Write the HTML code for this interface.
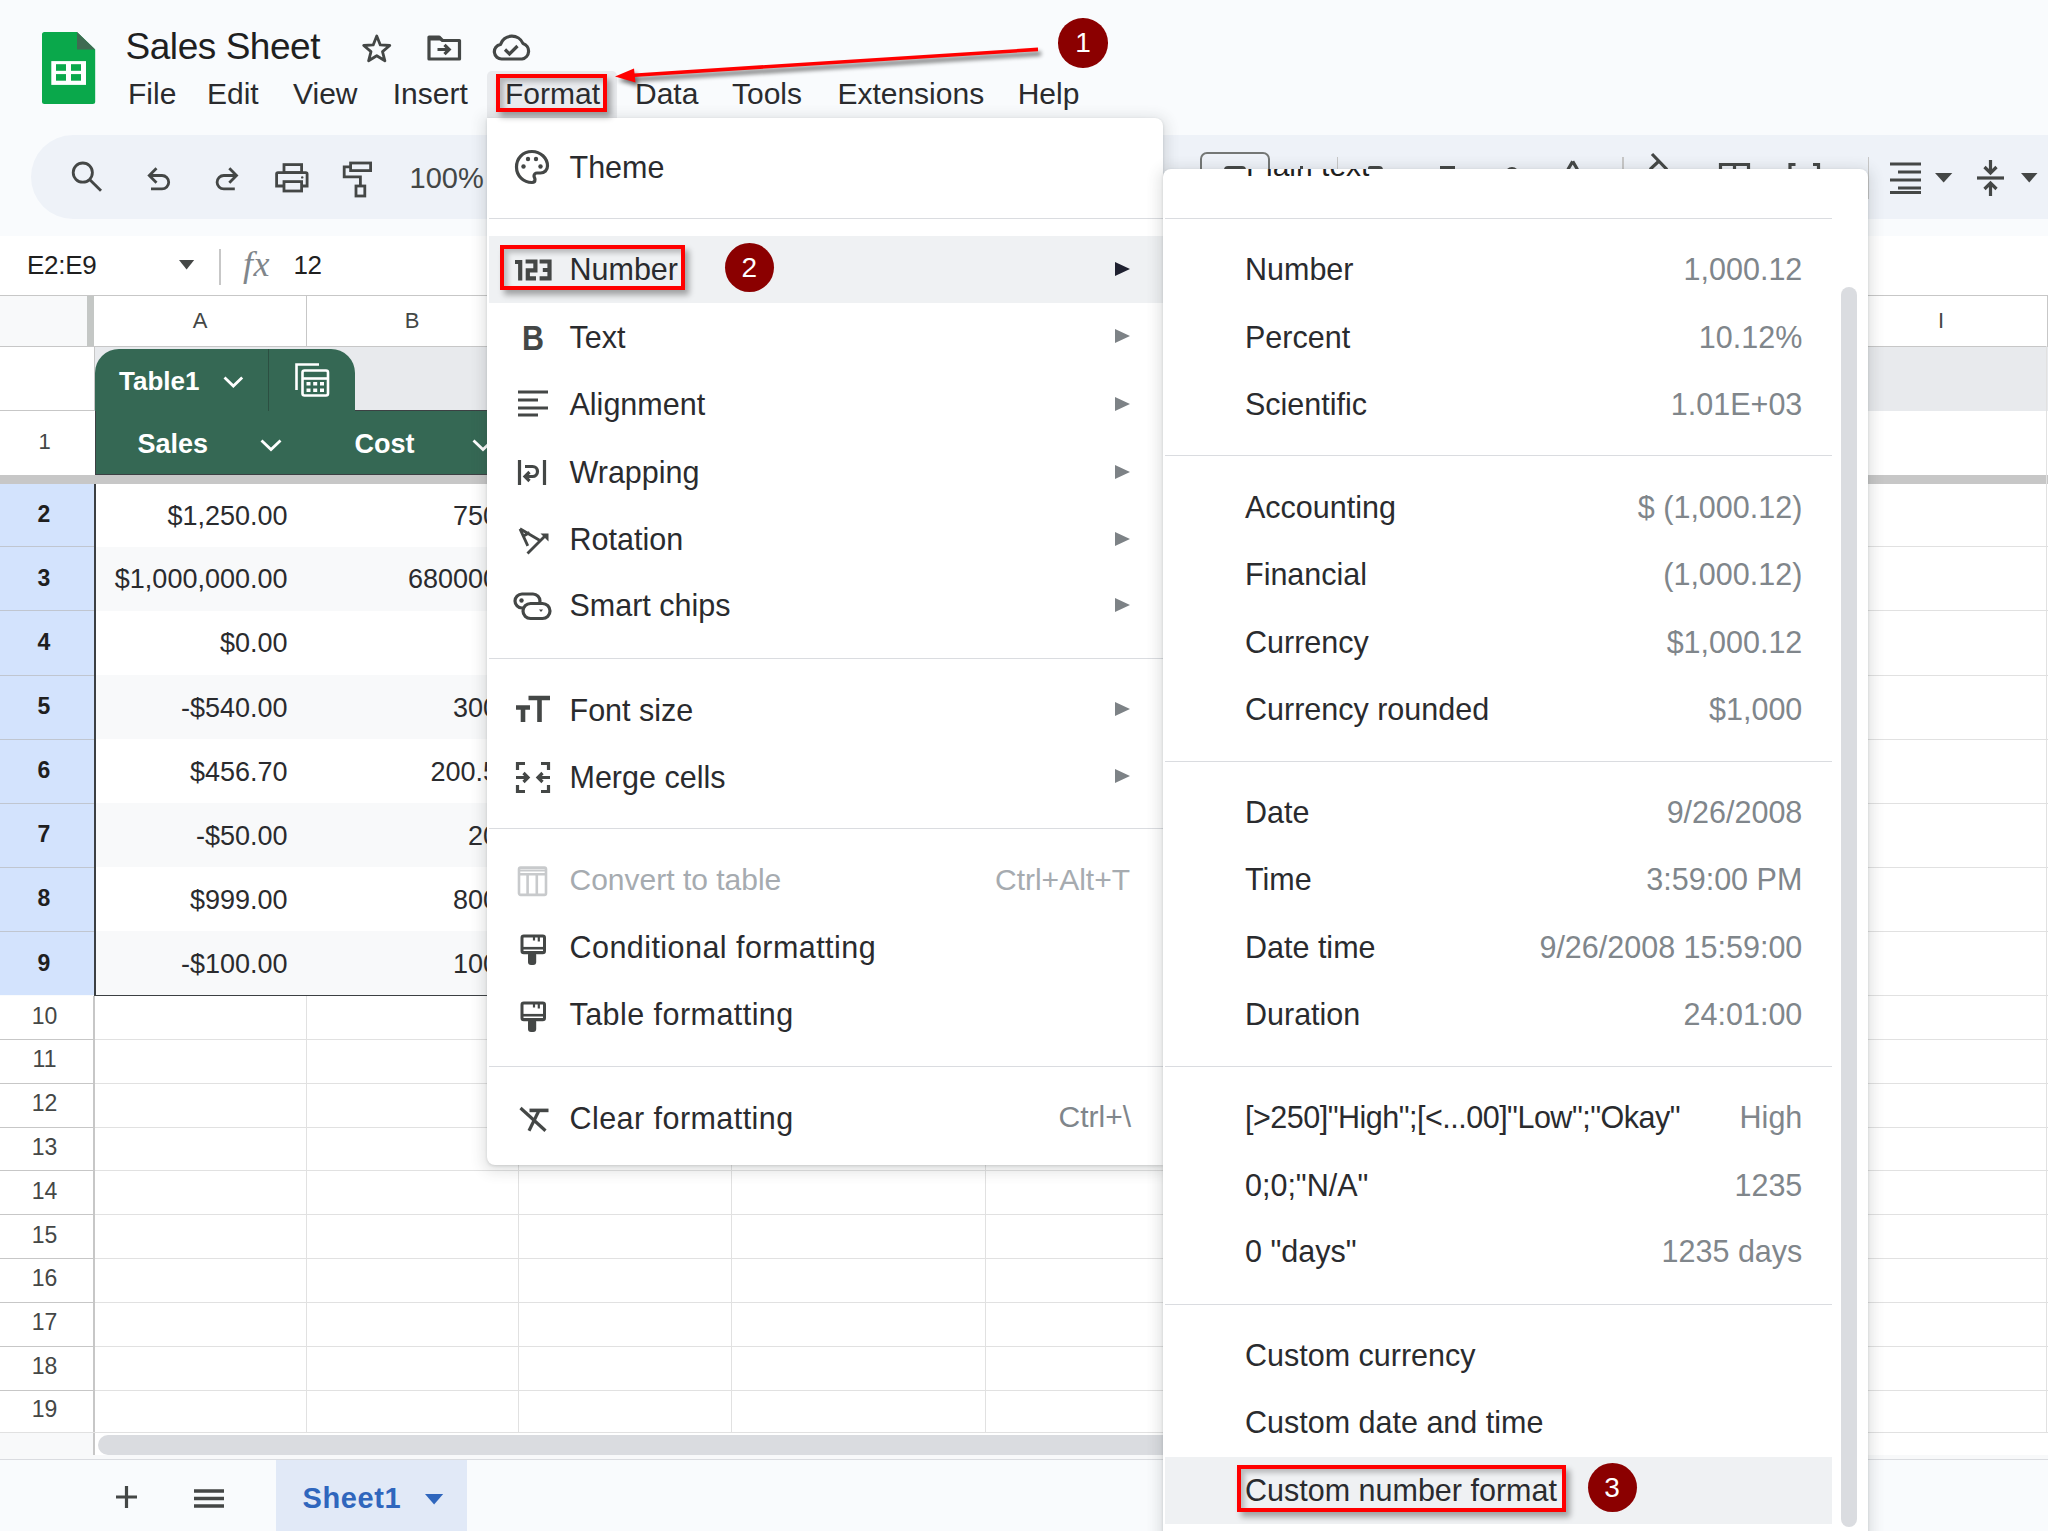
<!DOCTYPE html>
<html><head><meta charset="utf-8"><title>Sales Sheet</title>
<style>
html,body{margin:0;padding:0;}
body{width:2048px;height:1531px;overflow:hidden;position:relative;background:#f9fbfd;font-family:"Liberation Sans", sans-serif;}
.t{position:absolute;white-space:nowrap;}
.r{position:absolute;}
svg.r{overflow:visible;}
</style></head><body>
<div class="r" style="left:0.0px;top:236.0px;width:2048.0px;height:59.0px;background:#ffffff;"></div>
<div class="r" style="left:0.0px;top:295.0px;width:2048.0px;height:1.0px;background:#c7c7c7;"></div>
<div class="r" style="left:0.0px;top:296.0px;width:2048.0px;height:50.0px;background:#ffffff;"></div>
<div class="r" style="left:0.0px;top:296.0px;width:87.0px;height:50.0px;background:#f8f9fa;"></div>
<div class="r" style="left:87.0px;top:296.0px;width:7.0px;height:50.0px;background:#c4c7c5;"></div>
<div class="r" style="left:0.0px;top:345.5px;width:2048.0px;height:1.0px;background:#c7c7c7;"></div>
<div class="r" style="left:305.5px;top:296.0px;width:1.0px;height:50.0px;background:#c7c7c7;"></div>
<div class="r" style="left:518.0px;top:296.0px;width:1.0px;height:50.0px;background:#c7c7c7;"></div>
<div class="r" style="left:730.5px;top:296.0px;width:1.0px;height:50.0px;background:#c7c7c7;"></div>
<div class="r" style="left:984.5px;top:296.0px;width:1.0px;height:50.0px;background:#c7c7c7;"></div>
<div class="r" style="left:1239.5px;top:296.0px;width:1.0px;height:50.0px;background:#c7c7c7;"></div>
<div class="r" style="left:1494.5px;top:296.0px;width:1.0px;height:50.0px;background:#c7c7c7;"></div>
<div class="r" style="left:1749.5px;top:296.0px;width:1.0px;height:50.0px;background:#c7c7c7;"></div>
<div class="r" style="left:2046.5px;top:296.0px;width:1.0px;height:50.0px;background:#c7c7c7;"></div>
<div class="t" style="left:200.0px;transform:translateX(-50%);top:310.2px;font-size:22px;line-height:22px;color:#444746;font-weight:400;">A</div>
<div class="t" style="left:412.0px;transform:translateX(-50%);top:310.2px;font-size:22px;line-height:22px;color:#444746;font-weight:400;">B</div>
<div class="t" style="left:1941.0px;transform:translateX(-50%);top:310.2px;font-size:22px;line-height:22px;color:#444746;font-weight:400;">I</div>
<div class="r" style="left:94.0px;top:346.5px;width:1954.0px;height:64.1px;background:#e8eaed;"></div>
<div class="r" style="left:0.0px;top:346.5px;width:94.0px;height:64.1px;background:#ffffff;"></div>
<div class="r" style="left:0.0px;top:410.1px;width:94.0px;height:1.0px;background:#c7c7c7;"></div>
<div class="r" style="left:93.5px;top:346.5px;width:1.0px;height:137.5px;background:#c7c7c7;"></div>
<div class="r" style="left:0.0px;top:411.1px;width:93.5px;height:63.5px;background:#ffffff;"></div>
<div class="r" style="left:94.0px;top:410.6px;width:1954.0px;height:64.0px;background:#ffffff;"></div>
<div class="t" style="left:44.5px;transform:translateX(-50%);top:431.1px;font-size:22px;line-height:22px;color:#444746;font-weight:400;">1</div>
<div class="r" style="left:95.0px;top:410.6px;width:1068.0px;height:64.0px;background:#356854;"></div>
<div class="r" style="left:95.0px;top:410.1px;width:1068.0px;height:1.2px;background:#3c4043;"></div>
<div class="r" style="left:94.5px;top:410.1px;width:1.3px;height:64.9px;background:#3c4043;"></div>
<div class="r" style="left:95.0px;top:473.8px;width:1068.0px;height:1.2px;background:#3c4043;"></div>
<div class="r" style="left:0.0px;top:474.6px;width:2048.0px;height:9.4px;background:#c7c7c7;"></div>
<div class="r" style="left:0.0px;top:484.0px;width:93.8px;height:62.8px;background:#d3e3fd;"></div>
<div class="r" style="left:96.0px;top:484.0px;width:1067.0px;height:62.8px;background:#ffffff;"></div>
<div class="r" style="left:1868.0px;top:546.3px;width:180.0px;height:1.0px;background:#e1e1e1;"></div>
<div class="r" style="left:0.0px;top:546.8px;width:93.8px;height:64.1px;background:#d3e3fd;"></div>
<div class="r" style="left:96.0px;top:546.8px;width:1067.0px;height:64.1px;background:#f8f9fa;"></div>
<div class="r" style="left:0.0px;top:546.3px;width:93.8px;height:1.0px;background:#c0c6d0;"></div>
<div class="r" style="left:1868.0px;top:610.4px;width:180.0px;height:1.0px;background:#e1e1e1;"></div>
<div class="r" style="left:0.0px;top:610.9px;width:93.8px;height:64.1px;background:#d3e3fd;"></div>
<div class="r" style="left:96.0px;top:610.9px;width:1067.0px;height:64.1px;background:#ffffff;"></div>
<div class="r" style="left:0.0px;top:610.4px;width:93.8px;height:1.0px;background:#c0c6d0;"></div>
<div class="r" style="left:1868.0px;top:674.5px;width:180.0px;height:1.0px;background:#e1e1e1;"></div>
<div class="r" style="left:0.0px;top:675.0px;width:93.8px;height:64.1px;background:#d3e3fd;"></div>
<div class="r" style="left:96.0px;top:675.0px;width:1067.0px;height:64.1px;background:#f8f9fa;"></div>
<div class="r" style="left:0.0px;top:674.5px;width:93.8px;height:1.0px;background:#c0c6d0;"></div>
<div class="r" style="left:1868.0px;top:738.6px;width:180.0px;height:1.0px;background:#e1e1e1;"></div>
<div class="r" style="left:0.0px;top:739.1px;width:93.8px;height:64.1px;background:#d3e3fd;"></div>
<div class="r" style="left:96.0px;top:739.1px;width:1067.0px;height:64.1px;background:#ffffff;"></div>
<div class="r" style="left:0.0px;top:738.6px;width:93.8px;height:1.0px;background:#c0c6d0;"></div>
<div class="r" style="left:1868.0px;top:802.7px;width:180.0px;height:1.0px;background:#e1e1e1;"></div>
<div class="r" style="left:0.0px;top:803.2px;width:93.8px;height:64.1px;background:#d3e3fd;"></div>
<div class="r" style="left:96.0px;top:803.2px;width:1067.0px;height:64.1px;background:#f8f9fa;"></div>
<div class="r" style="left:0.0px;top:802.7px;width:93.8px;height:1.0px;background:#c0c6d0;"></div>
<div class="r" style="left:1868.0px;top:866.8px;width:180.0px;height:1.0px;background:#e1e1e1;"></div>
<div class="r" style="left:0.0px;top:867.3px;width:93.8px;height:64.1px;background:#d3e3fd;"></div>
<div class="r" style="left:96.0px;top:867.3px;width:1067.0px;height:64.1px;background:#ffffff;"></div>
<div class="r" style="left:0.0px;top:866.8px;width:93.8px;height:1.0px;background:#c0c6d0;"></div>
<div class="r" style="left:1868.0px;top:930.9px;width:180.0px;height:1.0px;background:#e1e1e1;"></div>
<div class="r" style="left:0.0px;top:931.4px;width:93.8px;height:64.1px;background:#d3e3fd;"></div>
<div class="r" style="left:96.0px;top:931.4px;width:1067.0px;height:64.1px;background:#f8f9fa;"></div>
<div class="r" style="left:0.0px;top:930.9px;width:93.8px;height:1.0px;background:#c0c6d0;"></div>
<div class="r" style="left:1868.0px;top:995.0px;width:180.0px;height:1.0px;background:#e1e1e1;"></div>
<div class="r" style="left:93.8px;top:484.0px;width:2.2px;height:512.0px;background:#3c4043;"></div>
<div class="r" style="left:95.0px;top:994.5px;width:1068.0px;height:2.0px;background:#3c4043;"></div>
<div class="t" style="left:44.0px;transform:translateX(-50%);top:503.4px;font-size:23px;line-height:23px;color:#1f1f1f;font-weight:700;">2</div>
<div class="t" style="left:44.0px;transform:translateX(-50%);top:566.9px;font-size:23px;line-height:23px;color:#1f1f1f;font-weight:700;">3</div>
<div class="t" style="left:44.0px;transform:translateX(-50%);top:631.0px;font-size:23px;line-height:23px;color:#1f1f1f;font-weight:700;">4</div>
<div class="t" style="left:44.0px;transform:translateX(-50%);top:695.1px;font-size:23px;line-height:23px;color:#1f1f1f;font-weight:700;">5</div>
<div class="t" style="left:44.0px;transform:translateX(-50%);top:759.2px;font-size:23px;line-height:23px;color:#1f1f1f;font-weight:700;">6</div>
<div class="t" style="left:44.0px;transform:translateX(-50%);top:823.3px;font-size:23px;line-height:23px;color:#1f1f1f;font-weight:700;">7</div>
<div class="t" style="left:44.0px;transform:translateX(-50%);top:887.4px;font-size:23px;line-height:23px;color:#1f1f1f;font-weight:700;">8</div>
<div class="t" style="left:44.0px;transform:translateX(-50%);top:951.5px;font-size:23px;line-height:23px;color:#1f1f1f;font-weight:700;">9</div>
<div class="t" style="right:1760.5px;top:502.8px;font-size:27px;line-height:27px;color:#2a2b2e;font-weight:400;">$1,250.00</div>
<div class="t" style="right:1760.5px;top:566.3px;font-size:27px;line-height:27px;color:#2a2b2e;font-weight:400;">$1,000,000.00</div>
<div class="t" style="right:1760.5px;top:630.4px;font-size:27px;line-height:27px;color:#2a2b2e;font-weight:400;">$0.00</div>
<div class="t" style="right:1760.5px;top:694.5px;font-size:27px;line-height:27px;color:#2a2b2e;font-weight:400;">-$540.00</div>
<div class="t" style="right:1760.5px;top:758.6px;font-size:27px;line-height:27px;color:#2a2b2e;font-weight:400;">$456.70</div>
<div class="t" style="right:1760.5px;top:822.7px;font-size:27px;line-height:27px;color:#2a2b2e;font-weight:400;">-$50.00</div>
<div class="t" style="right:1760.5px;top:886.8px;font-size:27px;line-height:27px;color:#2a2b2e;font-weight:400;">$999.00</div>
<div class="t" style="right:1760.5px;top:950.9px;font-size:27px;line-height:27px;color:#2a2b2e;font-weight:400;">-$100.00</div>
<div class="t" style="right:1550.0px;top:502.8px;font-size:27px;line-height:27px;color:#2a2b2e;font-weight:400;">750</div>
<div class="t" style="right:1550.0px;top:566.3px;font-size:27px;line-height:27px;color:#2a2b2e;font-weight:400;">680000</div>
<div class="t" style="right:1550.0px;top:694.5px;font-size:27px;line-height:27px;color:#2a2b2e;font-weight:400;">300</div>
<div class="t" style="right:1550.0px;top:758.6px;font-size:27px;line-height:27px;color:#2a2b2e;font-weight:400;">200.5</div>
<div class="t" style="right:1550.0px;top:822.7px;font-size:27px;line-height:27px;color:#2a2b2e;font-weight:400;">20</div>
<div class="t" style="right:1550.0px;top:886.8px;font-size:27px;line-height:27px;color:#2a2b2e;font-weight:400;">800</div>
<div class="t" style="right:1550.0px;top:950.9px;font-size:27px;line-height:27px;color:#2a2b2e;font-weight:400;">100</div>
<div class="r" style="left:0.0px;top:996.0px;width:2048.0px;height:436.0px;background:#ffffff;"></div>
<div class="r" style="left:0.0px;top:1038.8px;width:2048.0px;height:1.0px;background:#e1e1e1;"></div>
<div class="r" style="left:0.0px;top:1038.8px;width:93.8px;height:1.0px;background:#c7c7c7;"></div>
<div class="t" style="left:44.5px;transform:translateX(-50%);top:1004.5px;font-size:23px;line-height:23px;color:#444746;font-weight:400;">10</div>
<div class="r" style="left:0.0px;top:1082.6px;width:2048.0px;height:1.0px;background:#e1e1e1;"></div>
<div class="r" style="left:0.0px;top:1082.6px;width:93.8px;height:1.0px;background:#c7c7c7;"></div>
<div class="t" style="left:44.5px;transform:translateX(-50%);top:1048.1px;font-size:23px;line-height:23px;color:#444746;font-weight:400;">11</div>
<div class="r" style="left:0.0px;top:1126.5px;width:2048.0px;height:1.0px;background:#e1e1e1;"></div>
<div class="r" style="left:0.0px;top:1126.5px;width:93.8px;height:1.0px;background:#c7c7c7;"></div>
<div class="t" style="left:44.5px;transform:translateX(-50%);top:1091.9px;font-size:23px;line-height:23px;color:#444746;font-weight:400;">12</div>
<div class="r" style="left:0.0px;top:1170.3px;width:2048.0px;height:1.0px;background:#e1e1e1;"></div>
<div class="r" style="left:0.0px;top:1170.3px;width:93.8px;height:1.0px;background:#c7c7c7;"></div>
<div class="t" style="left:44.5px;transform:translateX(-50%);top:1135.8px;font-size:23px;line-height:23px;color:#444746;font-weight:400;">13</div>
<div class="r" style="left:0.0px;top:1214.2px;width:2048.0px;height:1.0px;background:#e1e1e1;"></div>
<div class="r" style="left:0.0px;top:1214.2px;width:93.8px;height:1.0px;background:#c7c7c7;"></div>
<div class="t" style="left:44.5px;transform:translateX(-50%);top:1179.6px;font-size:23px;line-height:23px;color:#444746;font-weight:400;">14</div>
<div class="r" style="left:0.0px;top:1258.0px;width:2048.0px;height:1.0px;background:#e1e1e1;"></div>
<div class="r" style="left:0.0px;top:1258.0px;width:93.8px;height:1.0px;background:#c7c7c7;"></div>
<div class="t" style="left:44.5px;transform:translateX(-50%);top:1223.5px;font-size:23px;line-height:23px;color:#444746;font-weight:400;">15</div>
<div class="r" style="left:0.0px;top:1301.9px;width:2048.0px;height:1.0px;background:#e1e1e1;"></div>
<div class="r" style="left:0.0px;top:1301.9px;width:93.8px;height:1.0px;background:#c7c7c7;"></div>
<div class="t" style="left:44.5px;transform:translateX(-50%);top:1267.3px;font-size:23px;line-height:23px;color:#444746;font-weight:400;">16</div>
<div class="r" style="left:0.0px;top:1345.8px;width:2048.0px;height:1.0px;background:#e1e1e1;"></div>
<div class="r" style="left:0.0px;top:1345.8px;width:93.8px;height:1.0px;background:#c7c7c7;"></div>
<div class="t" style="left:44.5px;transform:translateX(-50%);top:1311.2px;font-size:23px;line-height:23px;color:#444746;font-weight:400;">17</div>
<div class="r" style="left:0.0px;top:1389.6px;width:2048.0px;height:1.0px;background:#e1e1e1;"></div>
<div class="r" style="left:0.0px;top:1389.6px;width:93.8px;height:1.0px;background:#c7c7c7;"></div>
<div class="t" style="left:44.5px;transform:translateX(-50%);top:1355.0px;font-size:23px;line-height:23px;color:#444746;font-weight:400;">18</div>
<div class="r" style="left:0.0px;top:1431.5px;width:2048.0px;height:1.0px;background:#e1e1e1;"></div>
<div class="r" style="left:0.0px;top:1431.5px;width:93.8px;height:1.0px;background:#c7c7c7;"></div>
<div class="t" style="left:44.5px;transform:translateX(-50%);top:1397.9px;font-size:23px;line-height:23px;color:#444746;font-weight:400;">19</div>
<div class="r" style="left:93.0px;top:996.0px;width:1.5px;height:463.0px;background:#c7c7c7;"></div>
<div class="r" style="left:305.5px;top:996.0px;width:1.0px;height:436.0px;background:#e1e1e1;"></div>
<div class="r" style="left:518.0px;top:996.0px;width:1.0px;height:436.0px;background:#e1e1e1;"></div>
<div class="r" style="left:730.5px;top:996.0px;width:1.0px;height:436.0px;background:#e1e1e1;"></div>
<div class="r" style="left:984.5px;top:996.0px;width:1.0px;height:436.0px;background:#e1e1e1;"></div>
<div class="r" style="left:0.0px;top:1432.0px;width:93.0px;height:27.0px;background:#f8f9fa;"></div>
<div class="r" style="left:94.5px;top:1432.0px;width:1953.5px;height:27.0px;background:#ffffff;"></div>
<div class="r" style="left:0.0px;top:1454.7px;width:2048.0px;height:4.3px;background:#f8f9fa;"></div>
<div class="r" style="left:0.0px;top:1431.5px;width:2048.0px;height:1.0px;background:#e1e1e1;"></div>
<div class="r" style="left:97.7px;top:1435.0px;width:1102.3px;height:19.7px;background:#dadce0;border-radius:10px;"></div>
<div class="r" style="left:0.0px;top:1458.5px;width:2048.0px;height:1.0px;background:#dadce0;"></div>
<div class="r" style="left:0.0px;top:1459.5px;width:2048.0px;height:71.5px;background:#f9fbfd;"></div>
<div class="r" style="left:276.4px;top:1460.0px;width:190.4px;height:71.0px;background:#e1e9f7;"></div>
<div class="t" style="left:302.5px;top:1484.2px;font-size:29px;line-height:29px;color:#2f66bd;font-weight:700;letter-spacing:0.6px;">Sheet1</div>
<svg class="r" style="left:424.8px;top:1494.0px;width:18.2px;height:10.5px;" viewBox="0 0 18.20 10.50" preserveAspectRatio="none"><path d="M0 0 L18.2 0 L9.1 10.5 Z" fill="#2f66bd"/></svg>
<svg class="r" style="left:116.0px;top:1486.0px;width:21.0px;height:22.0px;" viewBox="0 0 21.00 22.00" preserveAspectRatio="none"><path d="M10.5 0 V22 M0 11 H21" stroke="#444746" stroke-width="3.2" fill="none"/></svg>
<svg class="r" style="left:194.0px;top:1489.0px;width:30.0px;height:19.0px;" viewBox="0 0 30.00 19.00" preserveAspectRatio="none"><path d="M0 2 H30 M0 9.5 H30 M0 17 H30" stroke="#444746" stroke-width="3.4" fill="none"/></svg>
<div class="r" style="left:1163.0px;top:484.0px;width:885.0px;height:512.0px;background:#ffffff;"></div>
<div class="r" style="left:1163.0px;top:546.3px;width:885.0px;height:1.0px;background:#e1e1e1;"></div>
<div class="r" style="left:1163.0px;top:610.4px;width:885.0px;height:1.0px;background:#e1e1e1;"></div>
<div class="r" style="left:1163.0px;top:674.5px;width:885.0px;height:1.0px;background:#e1e1e1;"></div>
<div class="r" style="left:1163.0px;top:738.6px;width:885.0px;height:1.0px;background:#e1e1e1;"></div>
<div class="r" style="left:1163.0px;top:802.7px;width:885.0px;height:1.0px;background:#e1e1e1;"></div>
<div class="r" style="left:1163.0px;top:866.8px;width:885.0px;height:1.0px;background:#e1e1e1;"></div>
<div class="r" style="left:1163.0px;top:930.9px;width:885.0px;height:1.0px;background:#e1e1e1;"></div>
<div class="r" style="left:1163.0px;top:995.0px;width:885.0px;height:1.0px;background:#e1e1e1;"></div>
<div class="r" style="left:2045.8px;top:346.0px;width:1.2px;height:1086.0px;background:#e1e1e1;"></div>
<svg class="r" style="left:41.8px;top:32.0px;width:53.2px;height:72.0px;" viewBox="0 0 53.20 72.00" preserveAspectRatio="none">
<path d="M2.5 0 H35 L53.2 17.5 V69.5 Q53.2 72 50.7 72 H2.5 Q0 72 0 69.5 V2.5 Q0 0 2.5 0 Z" fill="#0aa84b"/>
<path d="M35 0 L53.2 17.5 H35 Z" fill="#3f6b52"/>
<rect x="9.3" y="29.1" width="34.7" height="23.8" fill="#ffffff"/>
<rect x="14" y="32.2" width="10" height="6.6" fill="#0aa84b"/>
<rect x="29" y="32.2" width="10" height="6.6" fill="#0aa84b"/>
<rect x="14" y="42.1" width="10" height="6.6" fill="#0aa84b"/>
<rect x="29" y="42.1" width="10" height="6.6" fill="#0aa84b"/>
</svg>
<div class="t" style="left:125.5px;top:28.0px;font-size:37px;line-height:37px;color:#1f1f1f;font-weight:400;letter-spacing:-0.45px;">Sales Sheet</div>
<svg class="r" style="left:361.0px;top:32.5px;width:31.5px;height:29.5px;" viewBox="0 0 31.50 29.50" preserveAspectRatio="none"><path d="M15.75 3 L19.3 11.9 L28.8 12.5 L21.5 18.6 L23.9 27.8 L15.75 22.7 L7.6 27.8 L10 18.6 L2.7 12.5 L12.2 11.9 Z" fill="none" stroke="#444746" stroke-width="2.8" stroke-linejoin="round"/></svg>
<svg class="r" style="left:427.0px;top:35.0px;width:35.0px;height:26.0px;" viewBox="0 0 35.00 26.00" preserveAspectRatio="none"><path d="M2 2 H12 L15.5 5.5 H32.5 V24 H2 Z" fill="none" stroke="#444746" stroke-width="3.2" stroke-linejoin="round"/><path d="M2 2 H12 L15.5 5.5 H2 Z" fill="#444746"/><path d="M10.5 14.5 H22 M17.5 9.8 L22.2 14.5 L17.5 19.2" fill="none" stroke="#444746" stroke-width="3.2"/></svg>
<svg class="r" style="left:492.0px;top:34.0px;width:39.0px;height:27.0px;" viewBox="0 0 39.00 27.00" preserveAspectRatio="none"><path d="M10 25 H30 A8 8 0 0 0 31 9.5 A12 12 0 0 0 8.5 10.5 A7.3 7.3 0 0 0 10 25 Z" fill="none" stroke="#444746" stroke-width="3.2" stroke-linejoin="round"/><path d="M13 15.5 L17.5 20 L25.5 12" fill="none" stroke="#444746" stroke-width="3.2"/></svg>
<div class="r" style="left:487.0px;top:71.0px;width:130.0px;height:47.0px;background:#e9ebee;border-radius:5px 5px 0 0;"></div>
<div class="t" style="left:128.0px;top:78.9px;font-size:30px;line-height:30px;color:#2a2b2e;font-weight:400;">File</div>
<div class="t" style="left:207.0px;top:78.9px;font-size:30px;line-height:30px;color:#2a2b2e;font-weight:400;">Edit</div>
<div class="t" style="left:293.0px;top:78.9px;font-size:30px;line-height:30px;color:#2a2b2e;font-weight:400;">View</div>
<div class="t" style="left:392.7px;top:78.9px;font-size:30px;line-height:30px;color:#2a2b2e;font-weight:400;">Insert</div>
<div class="t" style="left:505.0px;top:78.9px;font-size:30px;line-height:30px;color:#2a2b2e;font-weight:400;">Format</div>
<div class="t" style="left:635.0px;top:78.9px;font-size:30px;line-height:30px;color:#2a2b2e;font-weight:400;">Data</div>
<div class="t" style="left:732.0px;top:78.9px;font-size:30px;line-height:30px;color:#2a2b2e;font-weight:400;">Tools</div>
<div class="t" style="left:837.4px;top:78.9px;font-size:30px;line-height:30px;color:#2a2b2e;font-weight:400;">Extensions</div>
<div class="t" style="left:1017.7px;top:78.9px;font-size:30px;line-height:30px;color:#2a2b2e;font-weight:400;">Help</div>
<div class="r" style="left:30.5px;top:135.0px;width:2077.5px;height:84.0px;background:#eef2f8;border-radius:42px;"></div>
<svg class="r" style="left:0.0px;top:0.0px;width:2048.0px;height:1531.0px;" viewBox="0 0 2048 1531" preserveAspectRatio="none"><circle cx="82.8" cy="172.6" r="9.6" fill="none" stroke="#444746" stroke-width="2.8"/><path d="M89.6 179.4 L101 190.8" fill="none" stroke="#444746" stroke-width="2.8"/>
<path d="M149.5 175.5 H162 A6.7 6.7 0 0 1 162 188.9 H151" fill="none" stroke="#444746" stroke-width="2.8"/><path d="M156.5 168.3 L149.3 175.5 L156.5 182.7" fill="none" stroke="#444746" stroke-width="2.8"/>
<path d="M236.3 175.5 H223.8 A6.7 6.7 0 0 0 223.8 188.9 H234.8" fill="none" stroke="#444746" stroke-width="2.8"/><path d="M229.3 168.3 L236.5 175.5 L229.3 182.7" fill="none" stroke="#444746" stroke-width="2.8"/>
<rect x="284" y="164.6" width="17.6" height="8" fill="none" stroke="#444746" stroke-width="2.8"/><path d="M284 186 H276.6 V174 Q276.6 172.6 278 172.6 H305.7 Q307.1 172.6 307.1 174 V186 H301.6" fill="none" stroke="#444746" stroke-width="2.8"/><rect x="284" y="181.6" width="17.6" height="9.4" fill="none" stroke="#444746" stroke-width="2.8"/><circle cx="302.2" cy="177.4" r="1.2" fill="#444746"/>
<rect x="350.6" y="163" width="20" height="7.6" fill="none" stroke="#444746" stroke-width="2.8"/><path d="M350.6 166.8 H344.2 V176.8 H360.4 V186" fill="none" stroke="#444746" stroke-width="2.8"/><rect x="356" y="186" width="8.8" height="10" fill="none" stroke="#444746" stroke-width="2.8"/></svg>
<div class="t" style="left:409.5px;top:164.3px;font-size:29px;line-height:29px;color:#444746;font-weight:400;">100%</div>
<div class="r" style="left:1867.9px;top:157.0px;width:1.4px;height:42.0px;background:#c7c7c7;"></div>
<svg class="r" style="left:1890.0px;top:162.0px;width:32.0px;height:32.0px;" viewBox="0 0 32.00 32.00" preserveAspectRatio="none"><path d="M0 2 H31 M8 10 H31 M0 18 H31 M8 26 H31 M0 30.5 H31" stroke="#444746" stroke-width="3.2" fill="none"/></svg>
<svg class="r" style="left:1934.7px;top:172.5px;width:17.3px;height:9.5px;" viewBox="0 0 17.30 9.50" preserveAspectRatio="none"><path d="M0 0 H17.3 L8.65 9.5 Z" fill="#444746"/></svg>
<svg class="r" style="left:1976.0px;top:160.0px;width:29.0px;height:36.0px;" viewBox="0 0 29.00 36.00" preserveAspectRatio="none"><path d="M1 18 H28" stroke="#444746" stroke-width="3.2" fill="none"/><path d="M14.5 0 V12 M8.5 7 L14.5 13 L20.5 7 M14.5 36 V24 M8.5 29 L14.5 23 L20.5 29" stroke="#444746" stroke-width="3.2" fill="none"/></svg>
<svg class="r" style="left:2021.0px;top:172.5px;width:16.5px;height:9.5px;" viewBox="0 0 16.50 9.50" preserveAspectRatio="none"><path d="M0 0 H16.5 L8.25 9.5 Z" fill="#444746"/></svg>
<div class="r" style="left:1163px;top:135px;width:705px;height:34.3px;overflow:hidden;"><div class="r" style="left:37.4px;top:17px;width:70px;height:40px;border:2.4px solid #747775;border-radius:7px;box-sizing:border-box;"></div><div class="r" style="left:61px;top:31px;width:22px;height:8px;background:#444746;border-radius:4px;"></div><div class="r" style="left:136.5px;top:31px;width:3px;height:8px;background:#444746;"></div><div class="r" style="left:173.5px;top:22px;width:1.4px;height:30px;background:#c7c7c7;"></div><div class="r" style="left:205.3px;top:30.8px;width:15px;height:8px;background:#444746;border-radius:2px 4px 0 0;"></div><div class="r" style="left:276.5px;top:30.8px;width:15px;height:8px;background:#444746;"></div><div class="r" style="left:341.5px;top:31.5px;width:14px;height:8px;background:#444746;border-radius:7px 7px 0 0;"></div><div class="r" style="left:459.3px;top:22px;width:1.4px;height:30px;background:#c7c7c7;"></div></div>
<svg class="r" style="left:1163.0px;top:135.0px;width:705.0px;height:34.3px;overflow:hidden;" viewBox="0 0 705 34.3" preserveAspectRatio="none"><path d="M409.7 26.4 L414.5 34.5 M409.7 26.4 L404.9 34.5" stroke="#444746" stroke-width="3.2" fill="none"/><path d="M489 19 L504 34.5 M496 26 L487 34.5" stroke="#444746" stroke-width="3.2" fill="none"/><path d="M557.5 34.5 V29.5 H585.5 V34.5 M571.5 29.5 V34.5" stroke="#444746" stroke-width="3.2" fill="none"/><path d="M627 34.5 V29.5 H632.5 M655.5 34.5 V29.5 H650" stroke="#444746" stroke-width="3.2" fill="none"/></svg>
<div class="t" style="left:27.0px;top:252.3px;font-size:26px;line-height:26px;color:#1f1f1f;font-weight:400;letter-spacing:-0.3px;">E2:E9</div>
<svg class="r" style="left:179.4px;top:260.0px;width:15.2px;height:9.4px;" viewBox="0 0 15.20 9.40" preserveAspectRatio="none"><path d="M0 0 H15.2 L7.6 9.4 Z" fill="#444746"/></svg>
<div class="r" style="left:219.3px;top:249.0px;width:1.4px;height:36.0px;background:#c7c7c7;"></div>
<div class="t" style="left:243.0px;top:246.0px;font-size:36px;line-height:36px;color:#80868b;font-weight:400;font-family:'Liberation Serif',serif;letter-spacing:0.5px;"><i>fx</i></div>
<div class="t" style="left:293.5px;top:252.3px;font-size:26px;line-height:26px;color:#1f1f1f;font-weight:400;letter-spacing:-0.5px;">12</div>
<div class="r" style="left:95.2px;top:349.0px;width:260.0px;height:62.0px;background:#356854;border-radius:24px 24px 0 0;"></div>
<div class="r" style="left:268.0px;top:349.0px;width:1.2px;height:62.0px;background:#2b4f41;"></div>
<div class="t" style="left:119.0px;top:367.9px;font-size:26px;line-height:26px;color:#ffffff;font-weight:700;">Table1</div>
<svg class="r" style="left:222.7px;top:376.0px;width:20.7px;height:11.4px;" viewBox="0 0 20.70 11.40" preserveAspectRatio="none"><path d="M1.5 1.5 L10.35 10 L19.2 1.5" fill="none" stroke="#ffffff" stroke-width="2.8"/></svg>
<svg class="r" style="left:295.0px;top:363.0px;width:35.0px;height:34.0px;" viewBox="0 0 35.00 34.00" preserveAspectRatio="none"><path d="M1.5 27 V1.5 H24" fill="none" stroke="#ffffff" stroke-width="2.6"/><rect x="7.5" y="7.5" width="25.5" height="25" rx="2" fill="none" stroke="#ffffff" stroke-width="2.6"/><path d="M7.5 15.5 H33" stroke="#ffffff" stroke-width="2.6"/><rect x="11.5" y="19" width="4" height="3.5" fill="#fff"/><rect x="18.2" y="19" width="4" height="3.5" fill="#fff"/><rect x="25" y="19" width="4" height="3.5" fill="#fff"/><rect x="11.5" y="25.5" width="4" height="3.5" fill="#fff"/><rect x="18.2" y="25.5" width="4" height="3.5" fill="#fff"/><rect x="25" y="25.5" width="4" height="3.5" fill="#fff"/></svg>
<div class="t" style="left:137.5px;top:431.3px;font-size:27px;line-height:27px;color:#ffffff;font-weight:700;">Sales</div>
<svg class="r" style="left:260.0px;top:438.7px;width:22.0px;height:12.3px;" viewBox="0 0 22.00 12.30" preserveAspectRatio="none"><path d="M1.5 1.5 L11 10.5 L20.5 1.5" fill="none" stroke="#ffffff" stroke-width="2.8"/></svg>
<div class="t" style="left:354.5px;top:431.3px;font-size:27px;line-height:27px;color:#ffffff;font-weight:700;">Cost</div>
<svg class="r" style="left:472.0px;top:438.7px;width:22.0px;height:12.3px;" viewBox="0 0 22.00 12.30" preserveAspectRatio="none"><path d="M1.5 1.5 L11 10.5 L20.5 1.5" fill="none" stroke="#ffffff" stroke-width="2.8"/></svg>
<div class="r" style="left:487px;top:118px;width:676px;height:1047px;background:#fff;border-radius:0 8px 0 8px;box-shadow:0 3px 14px 4px rgba(60,64,67,.14),0 1px 3px rgba(60,64,67,.18);"></div>
<div class="r" style="left:489.0px;top:217.7px;width:674.0px;height:1.4px;background:#dadce0;"></div>
<div class="r" style="left:489.0px;top:657.6px;width:674.0px;height:1.4px;background:#dadce0;"></div>
<div class="r" style="left:489.0px;top:827.8px;width:674.0px;height:1.4px;background:#dadce0;"></div>
<div class="r" style="left:489.0px;top:1065.6px;width:674.0px;height:1.4px;background:#dadce0;"></div>
<div class="r" style="left:489.0px;top:236.0px;width:674.0px;height:67.0px;background:#eff1f3;"></div>
<div class="t" style="left:569.5px;top:151.5px;font-size:30.5px;line-height:30.5px;color:#2a2b2e;font-weight:400;">Theme</div>
<div class="t" style="left:569.5px;top:254.3px;font-size:30.5px;line-height:30.5px;color:#2a2b2e;font-weight:400;">Number</div>
<svg class="r" style="left:1114.5px;top:262.1px;width:15.0px;height:14.0px;" viewBox="0 0 15.00 14.00" preserveAspectRatio="none"><path d="M0 0 L15 7 L0 14 Z" fill="#1f2130"/></svg>
<div class="t" style="left:569.5px;top:321.6px;font-size:30.5px;line-height:30.5px;color:#2a2b2e;font-weight:400;">Text</div>
<svg class="r" style="left:1114.5px;top:329.4px;width:15.0px;height:14.0px;" viewBox="0 0 15.00 14.00" preserveAspectRatio="none"><path d="M0 0 L15 7 L0 14 Z" fill="#7d8286"/></svg>
<div class="t" style="left:569.5px;top:389.4px;font-size:30.5px;line-height:30.5px;color:#2a2b2e;font-weight:400;">Alignment</div>
<svg class="r" style="left:1114.5px;top:397.2px;width:15.0px;height:14.0px;" viewBox="0 0 15.00 14.00" preserveAspectRatio="none"><path d="M0 0 L15 7 L0 14 Z" fill="#7d8286"/></svg>
<div class="t" style="left:569.5px;top:457.0px;font-size:30.5px;line-height:30.5px;color:#2a2b2e;font-weight:400;">Wrapping</div>
<svg class="r" style="left:1114.5px;top:464.8px;width:15.0px;height:14.0px;" viewBox="0 0 15.00 14.00" preserveAspectRatio="none"><path d="M0 0 L15 7 L0 14 Z" fill="#7d8286"/></svg>
<div class="t" style="left:569.5px;top:523.7px;font-size:30.5px;line-height:30.5px;color:#2a2b2e;font-weight:400;">Rotation</div>
<svg class="r" style="left:1114.5px;top:531.5px;width:15.0px;height:14.0px;" viewBox="0 0 15.00 14.00" preserveAspectRatio="none"><path d="M0 0 L15 7 L0 14 Z" fill="#7d8286"/></svg>
<div class="t" style="left:569.5px;top:590.3px;font-size:30.5px;line-height:30.5px;color:#2a2b2e;font-weight:400;">Smart chips</div>
<svg class="r" style="left:1114.5px;top:598.1px;width:15.0px;height:14.0px;" viewBox="0 0 15.00 14.00" preserveAspectRatio="none"><path d="M0 0 L15 7 L0 14 Z" fill="#7d8286"/></svg>
<div class="t" style="left:569.5px;top:694.5px;font-size:30.5px;line-height:30.5px;color:#2a2b2e;font-weight:400;">Font size</div>
<svg class="r" style="left:1114.5px;top:702.3px;width:15.0px;height:14.0px;" viewBox="0 0 15.00 14.00" preserveAspectRatio="none"><path d="M0 0 L15 7 L0 14 Z" fill="#7d8286"/></svg>
<div class="t" style="left:569.5px;top:761.5px;font-size:30.5px;line-height:30.5px;color:#2a2b2e;font-weight:400;">Merge cells</div>
<svg class="r" style="left:1114.5px;top:769.3px;width:15.0px;height:14.0px;" viewBox="0 0 15.00 14.00" preserveAspectRatio="none"><path d="M0 0 L15 7 L0 14 Z" fill="#7d8286"/></svg>
<div class="t" style="left:569.5px;top:932.0px;font-size:30.5px;line-height:30.5px;color:#2a2b2e;font-weight:400;letter-spacing:0.45px;">Conditional formatting</div>
<div class="t" style="left:569.5px;top:999.0px;font-size:30.5px;line-height:30.5px;color:#2a2b2e;font-weight:400;letter-spacing:0.45px;">Table formatting</div>
<div class="t" style="left:569.5px;top:1102.5px;font-size:30.5px;line-height:30.5px;color:#2a2b2e;font-weight:400;letter-spacing:0.45px;">Clear formatting</div>
<div class="t" style="left:569.5px;top:864.6px;font-size:30px;line-height:30px;color:#a6abb0;font-weight:400;">Convert to table</div>
<div class="t" style="right:918.0px;top:864.6px;font-size:30px;line-height:30px;color:#a6abb0;font-weight:400;">Ctrl+Alt+T</div>
<div class="t" style="right:917.0px;top:1102.1px;font-size:30px;line-height:30px;color:#80868b;font-weight:400;">Ctrl+\</div>
<svg class="r" style="left:514.0px;top:149.0px;width:37.0px;height:36.0px;" viewBox="0 0 37.00 36.00" preserveAspectRatio="none"><path d="M18 2.5 C8.5 2.5 2.5 9.5 2.5 18 C2.5 27 9.5 33.5 18 33.5 C20 33.5 21 32 21 30.5 C21 29 20 28.2 20 27 C20 25.4 21.4 24 23 24 H26.5 C30.5 24 33.5 21 33.5 17 C33.5 9 26.5 2.5 18 2.5 Z" fill="none" stroke="#444746" stroke-width="3.2"/><circle cx="9.5" cy="17.5" r="2.2" fill="#444746"/><circle cx="14" cy="10" r="2.2" fill="#444746"/><circle cx="22" cy="10" r="2.2" fill="#444746"/><circle cx="26.5" cy="17.5" r="2.2" fill="#444746"/></svg>
<svg class="r" style="left:513.5px;top:258.0px;width:39.0px;height:24.0px;" viewBox="0 0 39.00 24.00" preserveAspectRatio="none"><path d="M1 4 H6.2 V22.5 M11.6 3.5 H21.4 V12.3 H13.8 V20.4 H22 M25.6 3.5 H35.5 V20.4 H25.6 M28.8 12 H35.5" fill="none" stroke="#444746" stroke-width="4.2" stroke-linejoin="miter"/></svg>
<svg class="r" style="left:522.0px;top:324.0px;width:23.0px;height:27.0px;" viewBox="0 0 23.00 27.00" preserveAspectRatio="none"><text x="0" y="26" font-family="Liberation Sans" font-weight="700" font-size="35" fill="#444746" textLength="22" lengthAdjust="spacingAndGlyphs">B</text></svg>
<svg class="r" style="left:517.5px;top:390.0px;width:30.5px;height:27.0px;" viewBox="0 0 30.50 27.00" preserveAspectRatio="none"><path d="M0 2 H30 M0 10 H20 M0 18 H30 M0 25 H20" stroke="#444746" stroke-width="2.8" fill="none"/></svg>
<svg class="r" style="left:517.0px;top:459.0px;width:30.0px;height:27.0px;" viewBox="0 0 30.00 27.00" preserveAspectRatio="none"><path d="M2.5 1 V26 M27.5 1 V26" fill="none" stroke="#444746" stroke-width="3.2"/><path d="M8 7.5 H15.5 A5 5 0 0 1 15.5 17.5 H9" fill="none" stroke="#444746" stroke-width="3.2"/><path d="M12.5 13 L8 17.5 L12.5 22" fill="none" stroke="#444746" stroke-width="3.2"/></svg>
<svg class="r" style="left:518.0px;top:525.0px;width:32.0px;height:31.0px;" viewBox="0 0 32.00 31.00" preserveAspectRatio="none"><path d="M2 3.8 L21.5 15.2 M2 3.8 L9.8 20.8 M5.2 11.2 L11.6 7.5" fill="none" stroke="#444746" stroke-width="2.8"/><path d="M9.5 28.5 L26.5 11.5" fill="none" stroke="#444746" stroke-width="2.8"/><path d="M22.5 8.5 H30.5 V16.5 Z" fill="#444746"/></svg>
<svg class="r" style="left:513.0px;top:592.0px;width:40.0px;height:29.0px;" viewBox="0 0 40.00 29.00" preserveAspectRatio="none"><rect x="2" y="2" width="25" height="14" rx="7" fill="none" stroke="#444746" stroke-width="3.2"/><rect x="10" y="11.5" width="27" height="15" rx="7.5" fill="#fff" stroke="#444746" stroke-width="3.2"/><circle cx="8.5" cy="8.5" r="2.2" fill="#444746"/><path d="M26 17.5 L30 17.5 L28 20 Z" fill="#444746"/></svg>
<svg class="r" style="left:515.5px;top:696.0px;width:34.5px;height:27.0px;" viewBox="0 0 34.50 27.00" preserveAspectRatio="none"><path d="M0 11.5 H14 M7 11.5 V26 M12.5 2 H34 M23.5 2 V26" stroke="#444746" stroke-width="4.6" fill="none"/></svg>
<svg class="r" style="left:516.0px;top:762.0px;width:34.0px;height:31.0px;" viewBox="0 0 34.00 31.00" preserveAspectRatio="none"><path d="M1.5 8 V1.5 H9 M25 1.5 H32.5 V8 M1.5 23 V29.5 H9 M25 29.5 H32.5 V23" fill="none" stroke="#444746" stroke-width="3.2"/><path d="M0 15.5 H12 M7.5 11 L12 15.5 L7.5 20 M34 15.5 H22 M26.5 11 L22 15.5 L26.5 20" fill="none" stroke="#444746" stroke-width="3.2"/></svg>
<svg class="r" style="left:516.0px;top:865.0px;width:31.0px;height:31.0px;" viewBox="0 0 31.00 31.00" preserveAspectRatio="none"><rect x="3" y="2.6" width="27" height="27.3" rx="1.6" fill="none" stroke="#c8cacc" stroke-width="2.6"/><path d="M3 9.2 H30 M11.6 9.2 V29.9 M20.8 9.2 V29.9" stroke="#c8cacc" stroke-width="2.6" fill="none"/><path d="M3 5.5 H30" stroke="#c8cacc" stroke-width="2"/></svg>
<svg class="r" style="left:518.5px;top:932.5px;width:27.0px;height:33.0px;" viewBox="0 0 27.00 33.00" preserveAspectRatio="none"><rect x="3" y="3" width="22.5" height="16.8" rx="1.8" fill="none" stroke="#444746" stroke-width="3"/><path d="M3 15.2 H25.5" stroke="#444746" stroke-width="2.6"/><path d="M3 19 H25.5" stroke="#444746" stroke-width="2"/><path d="M15 3 V7.5 M19.8 3 V8.5" stroke="#444746" stroke-width="2.2"/><rect x="9" y="19" width="8.2" height="13" rx="3" fill="#444746"/></svg>
<svg class="r" style="left:518.5px;top:1000.3px;width:27.0px;height:33.0px;" viewBox="0 0 27.00 33.00" preserveAspectRatio="none"><rect x="3" y="3" width="22.5" height="16.8" rx="1.8" fill="none" stroke="#444746" stroke-width="3"/><path d="M3 15.2 H25.5" stroke="#444746" stroke-width="2.6"/><path d="M3 19 H25.5" stroke="#444746" stroke-width="2"/><path d="M15 3 V7.5 M19.8 3 V8.5" stroke="#444746" stroke-width="2.2"/><rect x="9" y="19" width="8.2" height="13" rx="3" fill="#444746"/></svg>
<svg class="r" style="left:517.5px;top:1106.0px;width:31.5px;height:27.0px;" viewBox="0 0 31.50 27.00" preserveAspectRatio="none"><path d="M2.5 2 L27.5 24.8" fill="none" stroke="#444746" stroke-width="3.2"/><path d="M11.5 4.4 H30.5" fill="none" stroke="#444746" stroke-width="3.6"/><path d="M20.5 5.5 L11 24.8" fill="none" stroke="#444746" stroke-width="3.2"/></svg>
<div class="r" style="left:1163px;top:169px;width:705px;height:1402px;background:#fff;border-radius:8px 8px 0 0;box-shadow:0 3px 14px 4px rgba(60,64,67,.14),0 1px 3px rgba(60,64,67,.18);"></div>
<div class="r" style="left:1163px;top:169px;width:600px;height:40px;overflow:hidden;"><div class="t" style="left:83px;top:-18.1px;font-size:30px;line-height:30px;color:#1f1f1f;">Plain text</div></div>
<div class="r" style="left:1165.0px;top:217.6px;width:667.0px;height:1.4px;background:#dadce0;"></div>
<div class="r" style="left:1165.0px;top:455.1px;width:667.0px;height:1.4px;background:#dadce0;"></div>
<div class="r" style="left:1165.0px;top:760.5px;width:667.0px;height:1.4px;background:#dadce0;"></div>
<div class="r" style="left:1165.0px;top:1065.7px;width:667.0px;height:1.4px;background:#dadce0;"></div>
<div class="r" style="left:1165.0px;top:1303.8px;width:667.0px;height:1.4px;background:#dadce0;"></div>
<div class="r" style="left:1165.0px;top:1456.8px;width:667.0px;height:67.6px;background:#eff1f3;"></div>
<div class="r" style="left:1841.0px;top:287.0px;width:16.4px;height:1240.0px;background:#dadce0;border-radius:8px;"></div>
<div class="t" style="left:1245.0px;top:254.2px;font-size:30.5px;line-height:30.5px;color:#2a2b2e;font-weight:400;">Number</div>
<div class="t" style="right:245.7px;top:254.2px;font-size:30.5px;line-height:30.5px;color:#80868b;font-weight:400;">1,000.12</div>
<div class="t" style="left:1245.0px;top:321.6px;font-size:30.5px;line-height:30.5px;color:#2a2b2e;font-weight:400;">Percent</div>
<div class="t" style="right:245.7px;top:321.6px;font-size:30.5px;line-height:30.5px;color:#80868b;font-weight:400;">10.12%</div>
<div class="t" style="left:1245.0px;top:388.9px;font-size:30.5px;line-height:30.5px;color:#2a2b2e;font-weight:400;">Scientific</div>
<div class="t" style="right:245.7px;top:388.9px;font-size:30.5px;line-height:30.5px;color:#80868b;font-weight:400;">1.01E+03</div>
<div class="t" style="left:1245.0px;top:491.7px;font-size:30.5px;line-height:30.5px;color:#2a2b2e;font-weight:400;">Accounting</div>
<div class="t" style="right:245.7px;top:491.7px;font-size:30.5px;line-height:30.5px;color:#80868b;font-weight:400;">$ (1,000.12)</div>
<div class="t" style="left:1245.0px;top:559.4px;font-size:30.5px;line-height:30.5px;color:#2a2b2e;font-weight:400;">Financial</div>
<div class="t" style="right:245.7px;top:559.4px;font-size:30.5px;line-height:30.5px;color:#80868b;font-weight:400;">(1,000.12)</div>
<div class="t" style="left:1245.0px;top:626.6px;font-size:30.5px;line-height:30.5px;color:#2a2b2e;font-weight:400;">Currency</div>
<div class="t" style="right:245.7px;top:626.6px;font-size:30.5px;line-height:30.5px;color:#80868b;font-weight:400;">$1,000.12</div>
<div class="t" style="left:1245.0px;top:693.6px;font-size:30.5px;line-height:30.5px;color:#2a2b2e;font-weight:400;">Currency rounded</div>
<div class="t" style="right:245.7px;top:693.6px;font-size:30.5px;line-height:30.5px;color:#80868b;font-weight:400;">$1,000</div>
<div class="t" style="left:1245.0px;top:796.8px;font-size:30.5px;line-height:30.5px;color:#2a2b2e;font-weight:400;">Date</div>
<div class="t" style="right:245.7px;top:796.8px;font-size:30.5px;line-height:30.5px;color:#80868b;font-weight:400;">9/26/2008</div>
<div class="t" style="left:1245.0px;top:864.3px;font-size:30.5px;line-height:30.5px;color:#2a2b2e;font-weight:400;">Time</div>
<div class="t" style="right:245.7px;top:864.3px;font-size:30.5px;line-height:30.5px;color:#80868b;font-weight:400;">3:59:00 PM</div>
<div class="t" style="left:1245.0px;top:932.0px;font-size:30.5px;line-height:30.5px;color:#2a2b2e;font-weight:400;">Date time</div>
<div class="t" style="right:245.7px;top:932.0px;font-size:30.5px;line-height:30.5px;color:#80868b;font-weight:400;">9/26/2008 15:59:00</div>
<div class="t" style="left:1245.0px;top:999.2px;font-size:30.5px;line-height:30.5px;color:#2a2b2e;font-weight:400;">Duration</div>
<div class="t" style="right:245.7px;top:999.2px;font-size:30.5px;line-height:30.5px;color:#80868b;font-weight:400;">24:01:00</div>
<div class="t" style="left:1245.0px;top:1101.7px;font-size:30.5px;line-height:30.5px;color:#2a2b2e;font-weight:400;"><span style="letter-spacing:-0.5px">[&gt;250]"High";[&lt;...00]"Low";"Okay"</span></div>
<div class="t" style="right:245.7px;top:1101.7px;font-size:30.5px;line-height:30.5px;color:#80868b;font-weight:400;">High</div>
<div class="t" style="left:1245.0px;top:1169.5px;font-size:30.5px;line-height:30.5px;color:#2a2b2e;font-weight:400;">0;0;"N/A"</div>
<div class="t" style="right:245.7px;top:1169.5px;font-size:30.5px;line-height:30.5px;color:#80868b;font-weight:400;">1235</div>
<div class="t" style="left:1245.0px;top:1236.1px;font-size:30.5px;line-height:30.5px;color:#2a2b2e;font-weight:400;">0 "days"</div>
<div class="t" style="right:245.7px;top:1236.1px;font-size:30.5px;line-height:30.5px;color:#80868b;font-weight:400;">1235 days</div>
<div class="t" style="left:1245.0px;top:1339.8px;font-size:30.5px;line-height:30.5px;color:#2a2b2e;font-weight:400;">Custom currency</div>
<div class="t" style="left:1245.0px;top:1406.9px;font-size:30.5px;line-height:30.5px;color:#2a2b2e;font-weight:400;">Custom date and time</div>
<div class="t" style="left:1245.0px;top:1474.6px;font-size:30.5px;line-height:30.5px;color:#2a2b2e;font-weight:400;">Custom number format</div>
<div class="r" style="left:495.5px;top:73.5px;width:111.5px;height:38.0px;box-sizing:border-box;border:4px solid #ff0000;box-shadow:4px 5px 6px rgba(0,0,0,.33), inset 4px 4px 5px rgba(0,0,0,.22);"></div>
<div class="r" style="left:500.0px;top:245.3px;width:184.5px;height:45.0px;box-sizing:border-box;border:4px solid #ff0000;box-shadow:4px 5px 6px rgba(0,0,0,.33), inset 4px 4px 5px rgba(0,0,0,.22);"></div>
<div class="r" style="left:1237.0px;top:1465.0px;width:329.0px;height:47.0px;box-sizing:border-box;border:4px solid #ff0000;box-shadow:4px 5px 6px rgba(0,0,0,.33), inset 4px 4px 5px rgba(0,0,0,.22);"></div>
<svg class="r" style="left:600.0px;top:30.0px;width:460.0px;height:70.0px;" viewBox="0 0 460 70" preserveAspectRatio="none"><defs><filter id="sh" x="-10%" y="-50%" width="120%" height="200%"><feGaussianBlur stdDeviation="2"/></filter></defs>
<g transform="translate(3,4)" opacity="0.55" filter="url(#sh)"><path d="M438 19.4 L30 45.5" stroke="#000" stroke-width="4" fill="none"/><path d="M15 46.5 L34 38.5 L35.5 52.5 Z" fill="#000"/></g>
<path d="M438 19.4 L30 45.5" stroke="#ff0000" stroke-width="3.6" fill="none"/><path d="M15 46.5 L34 38.5 L35.5 52.5 Z" fill="#ff0000"/></svg>
<div class="r" style="left:1058.2px;top:18.0px;width:49.5px;height:49.5px;border-radius:50%;background:#8b0000;"></div>
<div class="t" style="left:1083.0px;transform:translateX(-50%);top:29.2px;font-size:28px;line-height:28px;color:#ffffff;font-weight:400;">1</div>
<div class="r" style="left:724.7px;top:242.7px;width:49px;height:49px;border-radius:50%;background:#8b0000;"></div>
<div class="t" style="left:749.2px;transform:translateX(-50%);top:253.7px;font-size:28px;line-height:28px;color:#ffffff;font-weight:400;">2</div>
<div class="r" style="left:1587.5px;top:1463.3px;width:49px;height:49px;border-radius:50%;background:#8b0000;"></div>
<div class="t" style="left:1612.0px;transform:translateX(-50%);top:1474.3px;font-size:28px;line-height:28px;color:#ffffff;font-weight:400;">3</div>
</body></html>
